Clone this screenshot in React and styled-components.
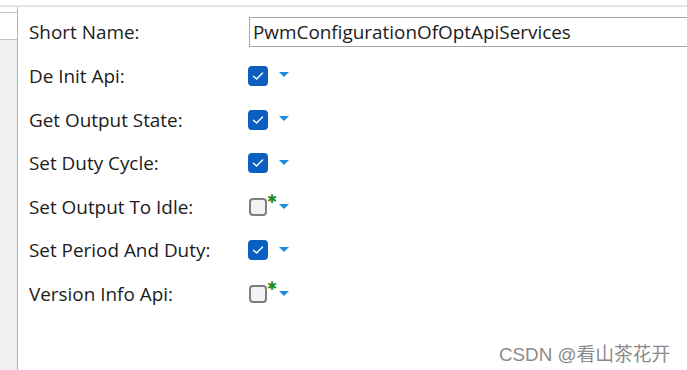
import React from "react";
import styled, { createGlobalStyle } from "styled-components";

const Global = createGlobalStyle`
  html, body { margin: 0; padding: 0; background: #ffffff; }
  body { font-family: "Open Sans", "Noto Sans", "Noto Sans CJK SC", sans-serif; }
  #root { width: 687px; height: 370px; overflow: hidden; }
`;

const Page = styled.div`
  position: relative;
  width: 687px;
  height: 370px;
  display: flex;
  flex-direction: column;
  background: #ffffff;
`;

const TopStrip = styled.div`
  height: 5px;
  border-bottom: 2px solid #e4e4e4;
  flex: none;
`;

const Body = styled.div`
  flex: 1;
  display: flex;
`;

const Sidebar = styled.div`
  width: 17px;
  flex: none;
  display: flex;
  flex-direction: column;
  border-right: 1px solid #b4b4b4;
  background: #ffffff;
`;

const SidebarHead = styled.div`
  margin-top: 5px;
  height: 26px;
  border-top: 1px solid #c4c4c4;
  border-bottom: 1px solid #c4c4c4;
  background: #ffffff;
`;

const SidebarFill = styled.div`
  flex: 1;
  background: #f0f0f0;
`;

const Form = styled.div`
  flex: 1;
  display: flex;
  flex-direction: column;
  padding: 10px 0 0 11px;
`;

const Row = styled.div`
  display: grid;
  grid-template-columns: 222px 1fr;
  align-items: center;
  height: ${(p) => p.$h}px;
  margin-bottom: ${(p) => p.$mb || 0}px;
`;

const Label = styled.div`
  font-size: 18.9px;
  color: #1c1c1c;
  white-space: nowrap;
`;

const Input = styled.div`
  height: 28px;
  border: 1px solid #a6a6a6;
  border-right: none;
  margin-left: -2px;
  padding-left: 3px;
  display: flex;
  align-items: center;
  font-size: 18.9px;
  color: #1c1c1c;
  white-space: nowrap;
`;

const Control = styled.div`
  display: flex;
  align-items: center;
  margin-left: -3px;
`;

const Box = styled.div`
  position: relative;
  width: ${(p) => (p.$checked ? 20 : 18)}px;
  height: ${(p) => (p.$checked ? 20 : 18)}px;
  box-sizing: border-box;
  border-radius: 4px;
  background: ${(p) => (p.$checked ? "#0b5fc0" : "#f2f2f2")};
  border: ${(p) => (p.$checked ? "none" : "2px solid #7e7e7e")};
  display: flex;
  align-items: center;
  justify-content: center;
  margin: ${(p) => (p.$checked ? "0" : "1px")};
`;

const Star = styled.span`
  position: absolute;
  left: 16px;
  top: -7px;
  color: #1d8c1d;
  font-size: 12px;
  font-weight: bold;
  line-height: 1;
  font-family: "DejaVu Sans", sans-serif;
`;

const Arrow = styled.div`
  width: 0;
  height: 0;
  margin-left: 11px;
  margin-top: ${(p) => (p.$checked ? -2 : 0)}px;
  border-left: 5px solid transparent;
  border-right: 5px solid transparent;
  border-top: 5px solid #1a8be0;
`;

const Watermark = styled.div`
  position: absolute;
  left: 499px;
  top: 339px;
  font-family: "Liberation Sans", "Noto Sans CJK SC", sans-serif;
  font-size: 18.8px;
  color: #8a8a8a;
  white-space: nowrap;
`;

const items = [
  ["De Init Api:", true],
  ["Get Output State:", true],
  ["Set Duty Cycle:", true],
  ["Set Output To Idle:", false],
  ["Set Period And Duty:", true],
  ["Version Info Api:", false],
];

function Check({ checked }) {
  return (
    <Control>
      <Box $checked={checked}>
        {checked ? (
          <svg width="12" height="10" viewBox="0 0 12 10">
            <path d="M1.5 5.2 L4.6 8 L10.5 2" fill="none" stroke="#ffffff" strokeWidth="1.4" strokeLinecap="round" strokeLinejoin="round" />
          </svg>
        ) : (
          <Star>✱</Star>
        )}
      </Box>
      <Arrow $checked={checked} />
    </Control>
  );
}

export default function App() {
  return (
    <Page>
      <Global />
      <TopStrip />
      <Body>
        <Sidebar>
          <SidebarHead />
          <SidebarFill />
        </Sidebar>
        <Form>
          <Row $h={30} $mb={7.2}>
            <Label>Short Name:</Label>
            <Input>PwmConfigurationOfOptApiServices</Input>
          </Row>
          {items.map(([label, checked]) => (
            <Row key={label} $h={43.6}>
              <Label>{label}</Label>
              <Check checked={checked} />
            </Row>
          ))}
        </Form>
      </Body>
      <Watermark>CSDN @看山茶花开</Watermark>
    </Page>
  );
}
